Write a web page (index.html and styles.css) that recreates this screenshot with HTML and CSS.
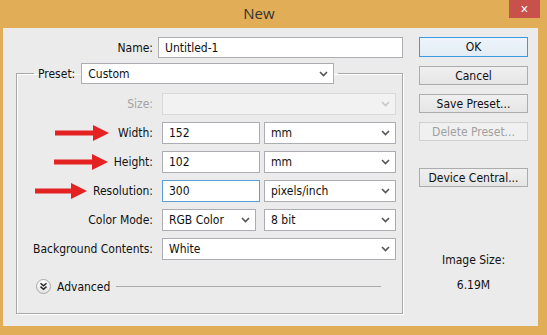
FILE: index.html
```html
<!DOCTYPE html>
<html>
<head>
<meta charset="utf-8">
<link rel="stylesheet" href="styles.css">
</head>
<body>
<div class="window">
  <div class="titlebar">
    <div class="title">New</div>
    <div class="close">&#x2715;</div>
  </div>
  <div class="content">
    <div class="left">
      <div class="name-row">
        <span class="label">Name:</span>
        <div class="field">Untitled-1</div>
      </div>
      <fieldset class="group">
        <legend class="legend">
          <span class="label">Preset:</span>
          <div class="field select preset"><span>Custom</span><svg class="chev" width="9" height="6" viewBox="0 0 9 6"><path d="M1 1l3.5 3.5L8 1" fill="none" stroke="#555" stroke-width="1.6"/></svg></div>
        </legend>
        <div class="grid">
          <span class="label disabled">Size:</span>
          <div class="field select disabled span3"><span></span><svg class="chev" width="9" height="6" viewBox="0 0 9 6"><path d="M1 1l3.5 3.5L8 1" fill="none" stroke="#c8c8c8" stroke-width="1.6"/></svg></div>

          <span class="label"><svg class="arrow" width="54" height="16" viewBox="0 0 54 16"><path d="M0 5.5h38V0l16 8-16 8v-5.5H0z" fill="#e42222"/></svg><span class="gap9"></span>Width:</span>
          <div class="field">152</div>
          <div class="field select"><span>mm</span><svg class="chev" width="9" height="6" viewBox="0 0 9 6"><path d="M1 1l3.5 3.5L8 1" fill="none" stroke="#555" stroke-width="1.6"/></svg></div>

          <span class="label"><svg class="arrow" width="54" height="16" viewBox="0 0 54 16"><path d="M0 5.5h38V0l16 8-16 8v-5.5H0z" fill="#e42222"/></svg><span class="gap6"></span>Height:</span>
          <div class="field">102</div>
          <div class="field select"><span>mm</span><svg class="chev" width="9" height="6" viewBox="0 0 9 6"><path d="M1 1l3.5 3.5L8 1" fill="none" stroke="#555" stroke-width="1.6"/></svg></div>

          <span class="label"><svg class="arrow" width="52" height="16" viewBox="0 0 52 16"><path d="M0 5.5h36V0l16 8-16 8v-5.5H0z" fill="#e42222"/></svg><span class="gap6"></span>Resolution:</span>
          <div class="field focus">300</div>
          <div class="field select"><span>pixels/inch</span><svg class="chev" width="9" height="6" viewBox="0 0 9 6"><path d="M1 1l3.5 3.5L8 1" fill="none" stroke="#555" stroke-width="1.6"/></svg></div>

          <span class="label">Color Mode:</span>
          <div class="field select narrow"><span>RGB Color</span><svg class="chev" width="9" height="6" viewBox="0 0 9 6"><path d="M1 1l3.5 3.5L8 1" fill="none" stroke="#555" stroke-width="1.6"/></svg></div>
          <div class="field select"><span>8 bit</span><svg class="chev" width="9" height="6" viewBox="0 0 9 6"><path d="M1 1l3.5 3.5L8 1" fill="none" stroke="#555" stroke-width="1.6"/></svg></div>

          <span class="label">Background Contents:</span>
          <div class="field select span3"><span>White</span><svg class="chev" width="9" height="6" viewBox="0 0 9 6"><path d="M1 1l3.5 3.5L8 1" fill="none" stroke="#555" stroke-width="1.6"/></svg></div>
        </div>
        <div class="advanced">
          <span class="adv-btn"><svg width="9" height="9" viewBox="0 0 9 9"><path d="M1.5 1.2l3 2.6 3-2.6M1.5 4.6l3 2.6 3-2.6" fill="none" stroke="#222" stroke-width="1.4"/></svg></span>
          <span class="adv-text">Advanced</span>
          <span class="adv-line"></span>
        </div>
      </fieldset>
    </div>
    <div class="right">
      <div class="btn default">OK</div>
      <div class="btn">Cancel</div>
      <div class="btn">Save Preset...</div>
      <div class="btn disabled">Delete Preset...</div>
      <div class="btn device">Device Central...</div>
      <div class="info first">Image Size:</div>
      <div class="info">6.19M</div>
    </div>
  </div>
</div>
</body>
</html>
```

FILE: styles.css
```css
* { box-sizing: border-box; }
html, body { margin: 0; padding: 0; }
body {
  width: 547px;
  height: 335px;
  overflow: hidden;
  background: #e3ad56;
  font-family: "DejaVu Sans Condensed", "DejaVu Sans", sans-serif;
  font-stretch: condensed;
  font-size: 12px;
  color: #111;
}
.window {
  width: 547px;
  height: 335px;
  background: #e2ad57;
  display: flex;
  flex-direction: column;
}
.titlebar {
  height: 28px;
  display: flex;
  align-items: flex-start;
}
.title {
  flex: 1;
  text-align: center;
  padding: 3px 0 0 0;
  margin-left: 9px;
  font-family: "Open Sans", "Liberation Sans", sans-serif;
  font-size: 15px;
  color: #333;
  font-stretch: normal;
}
.close {
  width: 31px;
  height: 18px;
  margin-right: 7px;
  background: #c8514c;
  color: #fff;
  font-family: "DejaVu Sans", sans-serif;
  font-size: 11px;
  font-weight: bold;
  display: flex;
  align-items: center;
  justify-content: center;
}
.content {
  margin: 0 9px 9px 3px;
  flex: 1;
  background: #ebebeb;
  display: flex;
  padding-top: 9px;
}
.left { width: 400px; }
.name-row {
  display: grid;
  grid-template-columns: 150px 245px;
  column-gap: 5px;
  height: 21px;
}
.label {
  display: flex;
  align-items: center;
  justify-content: flex-end;
  white-space: nowrap;
}
.label.disabled { color: #a3a3a3; }
.field {
  height: 100%;
  background: #fff;
  border: 1px solid #abadb3;
  display: flex;
  align-items: center;
  padding: 0 6px;
  white-space: nowrap;
}
.field.focus { border-color: #5a9fd8; }
.select { justify-content: space-between; padding-right: 5px; }
.select.disabled { background: #f2f2f2; border-color: #d9d9d9; }
.chev { flex: none; }
.group {
  margin: 5px 0 0 13px;
  width: 383px;
  height: 251px;
  border: 1px solid #a9a9a9;
  padding: 9px 6px 0 0;
  box-shadow: inset 1px 1px 0 #fff, 1px 1px 0 #fff;
}
.legend {
  margin-left: 17px;
  padding: 0 4px;
  display: flex;
  height: 21px;
}
.legend .label { margin-right: 6px; }
.preset { width: 253px; }
.grid {
  display: grid;
  grid-template-columns: 141px 98px 132px;
  grid-auto-rows: 22px;
  row-gap: 7px;
  column-gap: 4px;
}
.grid > .label { padding-right: 5px; }
.span3 { grid-column: 2 / 4; }
.narrow { width: 94px; }
.arrow { flex: none; }
.gap9 { width: 9px; flex: none; }
.gap6 { width: 6px; flex: none; }
.advanced {
  display: flex;
  align-items: center;
  margin: 19px 0 0 19px;
  height: 15px;
}
.adv-btn {
  width: 15px;
  height: 15px;
  border-radius: 50%;
  border: 1px solid #a8a8a8;
  background: linear-gradient(#ffffff, #e4e4e4);
  display: flex;
  align-items: center;
  justify-content: center;
}
.adv-text { margin-left: 6px; }
.adv-line {
  margin-left: 6px;
  width: 265px;
  height: 1px;
  background: #a9a9a9;
}
.right {
  margin-left: 16px;
  width: 109px;
  display: flex;
  flex-direction: column;
}
.btn {
  height: 19px;
  margin-top: 9px;
  border: 1px solid #acacac;
  background: linear-gradient(#f0f0f0, #e5e5e5);
  display: flex;
  align-items: center;
  justify-content: center;
  white-space: nowrap;
}
.btn.default {
  margin-top: 0;
  height: 20px;
  border-color: #3c9be0;
  background: linear-gradient(#eef4fa, #e3ecf5);
}
.btn.disabled {
  color: #a0a0a0;
  border-color: #d0d0d0;
  background: #f0f0f0;
}
.btn.device { margin-top: 27px; }
.info {
  text-align: center;
  height: 15px;
  line-height: 15px;
}
.info.first { margin-top: 66px; }
.info + .info { margin-top: 10px; }
```
